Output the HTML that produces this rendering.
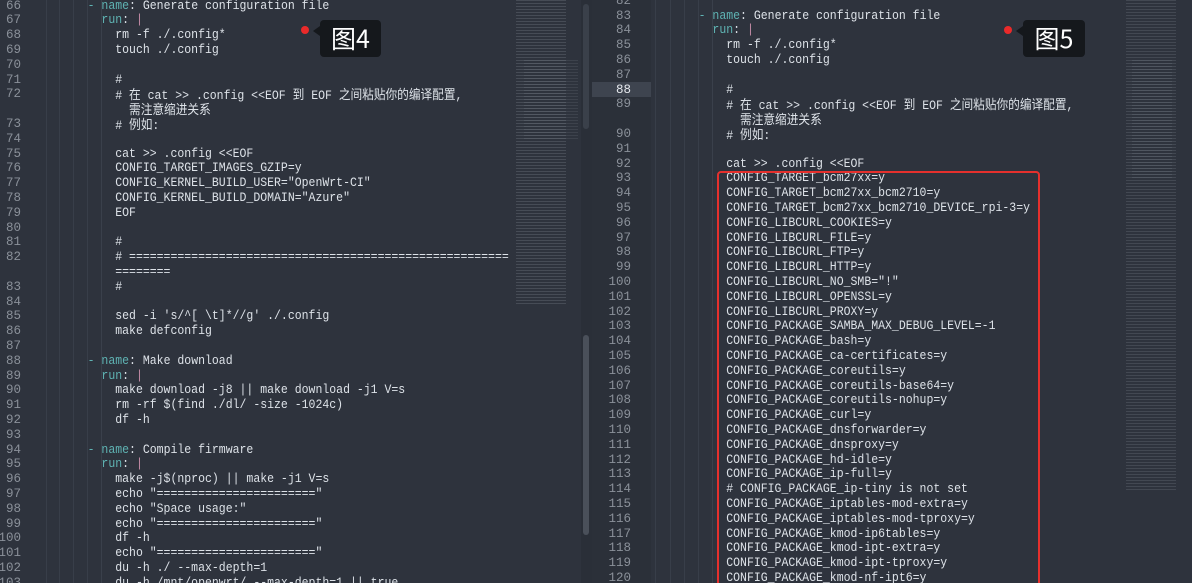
<!DOCTYPE html>
<html><head><meta charset="utf-8"><style>
*{margin:0;padding:0;box-sizing:border-box}
body{width:1192px;height:583px;overflow:hidden;background:#2e333d;position:relative;font-family:"Liberation Mono","Noto Sans CJK SC",monospace}
.pane{position:absolute;top:0;height:583px;overflow:hidden}
.g{position:absolute;text-align:right;color:#8b919a;font-size:12.5px;line-height:14.8px;width:40px}
.g div,.c div{height:14.8px;white-space:pre}
.c{position:absolute;color:#dde2e8;font-size:13px;line-height:14.8px;transform:scaleX(0.885);transform-origin:0 0;width:700px}
.t{color:#5fb3b3}.p{color:#c88da8}
.k{font-family:"Noto Sans CJK SC",sans-serif;font-size:13.2px}
.guide{position:absolute;top:0;width:1px;height:583px;background:#383e49}
.mm{position:absolute;background:repeating-linear-gradient(180deg,rgba(180,190,200,.22) 0 1px,transparent 1px 3px)}
.call{position:absolute;background:#15181c;border-radius:4px;color:#fff;font-family:"Noto Sans CJK SC",sans-serif;font-size:25px;line-height:37px;text-align:center}
.call:before{content:"";position:absolute;left:-7px;top:6px;border:5px solid transparent;border-right:7px solid #15181c;border-left:0}
.dot{position:absolute;width:8px;height:8px;border-radius:50%;background:#ea2a2a}
</style></head><body>

<!-- LEFT PANE -->
<div class="pane" style="left:0;width:592px;background:#2e333d">
  <div class="guide" style="left:46px"></div>
  <div class="guide" style="left:59px"></div>
  <div class="guide" style="left:73px"></div>
  <div class="guide" style="left:87px"></div>
  <div class="guide" style="left:101px;background:#3a404b"></div>
  <div class="g" style="left:-19px;top:-1.4px"><div>66</div><div>67</div><div>68</div><div>69</div><div>70</div><div>71</div><div>72</div><div></div><div>73</div><div>74</div><div>75</div><div>76</div><div>77</div><div>78</div><div>79</div><div>80</div><div>81</div><div>82</div><div></div><div>83</div><div>84</div><div>85</div><div>86</div><div>87</div><div>88</div><div>89</div><div>90</div><div>91</div><div>92</div><div>93</div><div>94</div><div>95</div><div>96</div><div>97</div><div>98</div><div>99</div><div>100</div><div>101</div><div>102</div><div>103</div></div>
  <div class="c" style="left:60px;top:-1.4px">
<div>    <span class="t">- name</span>: Generate configuration file</div>
<div>      <span class="t">run</span>: <span class="p">|</span></div>
<div>        rm -f ./.config*</div>
<div>        touch ./.config</div>
<div> </div>
<div>        #</div>
<div>        # <span class="k">在</span> cat &gt;&gt; .config &lt;&lt;EOF <span class="k">到</span> EOF <span class="k">之间粘贴你的编译配置</span>,</div>
<div>          <span class="k">需注意缩进关系</span></div>
<div>        # <span class="k">例如</span>:</div>
<div> </div>
<div>        cat &gt;&gt; .config &lt;&lt;EOF</div>
<div>        CONFIG_TARGET_IMAGES_GZIP=y</div>
<div>        CONFIG_KERNEL_BUILD_USER="OpenWrt-CI"</div>
<div>        CONFIG_KERNEL_BUILD_DOMAIN="Azure"</div>
<div>        EOF</div>
<div> </div>
<div>        #</div>
<div>        # =======================================================</div>
<div>        ========</div>
<div>        #</div>
<div> </div>
<div>        sed -i 's/^[ \t]*//g' ./.config</div>
<div>        make defconfig</div>
<div> </div>
<div>    <span class="t">- name</span>: Make download</div>
<div>      <span class="t">run</span>: <span class="p">|</span></div>
<div>        make download -j8 || make download -j1 V=s</div>
<div>        rm -rf $(find ./dl/ -size -1024c)</div>
<div>        df -h</div>
<div> </div>
<div>    <span class="t">- name</span>: Compile firmware</div>
<div>      <span class="t">run</span>: <span class="p">|</span></div>
<div>        make -j$(nproc) || make -j1 V=s</div>
<div>        echo "======================="</div>
<div>        echo "Space usage:"</div>
<div>        echo "======================="</div>
<div>        df -h</div>
<div>        echo "======================="</div>
<div>        du -h ./ --max-depth=1</div>
<div>        du -h /mnt/openwrt/ --max-depth=1 || true</div>
  </div>
  <div class="mm" style="left:516px;top:0;width:50px;height:305px;opacity:.8"></div>
  <div class="mm" style="left:524px;top:60px;width:54px;height:80px;opacity:.5"></div>
  <div style="position:absolute;left:581px;top:0;width:11px;height:583px;background:#2a2f38"></div>
  <div style="position:absolute;left:583px;top:4px;width:6px;height:125px;background:#3a404a;border-radius:3px"></div>
  <div style="position:absolute;left:583px;top:335px;width:6px;height:200px;background:#4a505a;border-radius:3px"></div>
  <div class="dot" style="left:301px;top:26px"></div>
  <div class="call" style="left:320px;top:20px;width:61px;height:37px">图4</div>
</div>

<!-- RIGHT PANE -->
<div class="pane" style="left:592px;width:600px;background:#2e333d">
  <div style="position:absolute;left:0;top:0;width:59px;height:583px;background:#2b3039"></div>
  <div style="position:absolute;left:0;top:82px;width:59px;height:15px;background:#3e444f"></div>
  <div class="guide" style="left:63px"></div>
  <div class="guide" style="left:78px"></div>
  <div class="guide" style="left:92px"></div>
  <div class="guide" style="left:106px"></div>
  <div class="guide" style="left:120px;background:#3a404b"></div>
  <div class="g" style="left:-1px;top:-6.2px"><div>82</div><div>83</div><div>84</div><div>85</div><div>86</div><div>87</div><div style="color:#e6e9ee">88</div><div>89</div><div></div><div>90</div><div>91</div><div>92</div><div>93</div><div>94</div><div>95</div><div>96</div><div>97</div><div>98</div><div>99</div><div>100</div><div>101</div><div>102</div><div>103</div><div>104</div><div>105</div><div>106</div><div>107</div><div>108</div><div>109</div><div>110</div><div>111</div><div>112</div><div>113</div><div>114</div><div>115</div><div>116</div><div>117</div><div>118</div><div>119</div><div>120</div></div>
  <div class="c" style="left:79px;top:-6.2px">
<div> </div>
<div>    <span class="t">- name</span>: Generate configuration file</div>
<div>      <span class="t">run</span>: <span class="p">|</span></div>
<div>        rm -f ./.config*</div>
<div>        touch ./.config</div>
<div> </div>
<div>        #</div>
<div>        # <span class="k">在</span> cat &gt;&gt; .config &lt;&lt;EOF <span class="k">到</span> EOF <span class="k">之间粘贴你的编译配置</span>,</div>
<div>          <span class="k">需注意缩进关系</span></div>
<div>        # <span class="k">例如</span>:</div>
<div> </div>
<div>        cat &gt;&gt; .config &lt;&lt;EOF</div>
<div>        CONFIG_TARGET_bcm27xx=y</div>
<div>        CONFIG_TARGET_bcm27xx_bcm2710=y</div>
<div>        CONFIG_TARGET_bcm27xx_bcm2710_DEVICE_rpi-3=y</div>
<div>        CONFIG_LIBCURL_COOKIES=y</div>
<div>        CONFIG_LIBCURL_FILE=y</div>
<div>        CONFIG_LIBCURL_FTP=y</div>
<div>        CONFIG_LIBCURL_HTTP=y</div>
<div>        CONFIG_LIBCURL_NO_SMB="!"</div>
<div>        CONFIG_LIBCURL_OPENSSL=y</div>
<div>        CONFIG_LIBCURL_PROXY=y</div>
<div>        CONFIG_PACKAGE_SAMBA_MAX_DEBUG_LEVEL=-1</div>
<div>        CONFIG_PACKAGE_bash=y</div>
<div>        CONFIG_PACKAGE_ca-certificates=y</div>
<div>        CONFIG_PACKAGE_coreutils=y</div>
<div>        CONFIG_PACKAGE_coreutils-base64=y</div>
<div>        CONFIG_PACKAGE_coreutils-nohup=y</div>
<div>        CONFIG_PACKAGE_curl=y</div>
<div>        CONFIG_PACKAGE_dnsforwarder=y</div>
<div>        CONFIG_PACKAGE_dnsproxy=y</div>
<div>        CONFIG_PACKAGE_hd-idle=y</div>
<div>        CONFIG_PACKAGE_ip-full=y</div>
<div>        # CONFIG_PACKAGE_ip-tiny is not set</div>
<div>        CONFIG_PACKAGE_iptables-mod-extra=y</div>
<div>        CONFIG_PACKAGE_iptables-mod-tproxy=y</div>
<div>        CONFIG_PACKAGE_kmod-ip6tables=y</div>
<div>        CONFIG_PACKAGE_kmod-ipt-extra=y</div>
<div>        CONFIG_PACKAGE_kmod-ipt-tproxy=y</div>
<div>        CONFIG_PACKAGE_kmod-nf-ipt6=y</div>
  </div>
  <div style="position:absolute;left:125px;top:171px;width:323px;height:420px;border:2.5px solid #e5302d;border-radius:4px"></div>
  <div class="mm" style="left:534px;top:0;width:50px;height:490px;opacity:.7"></div>
  <div class="mm" style="left:540px;top:60px;width:40px;height:120px;opacity:.5"></div>
  <div class="dot" style="left:412px;top:26px"></div>
  <div class="call" style="left:431px;top:20px;width:62px;height:37px">图5</div>
</div>
</body></html>
